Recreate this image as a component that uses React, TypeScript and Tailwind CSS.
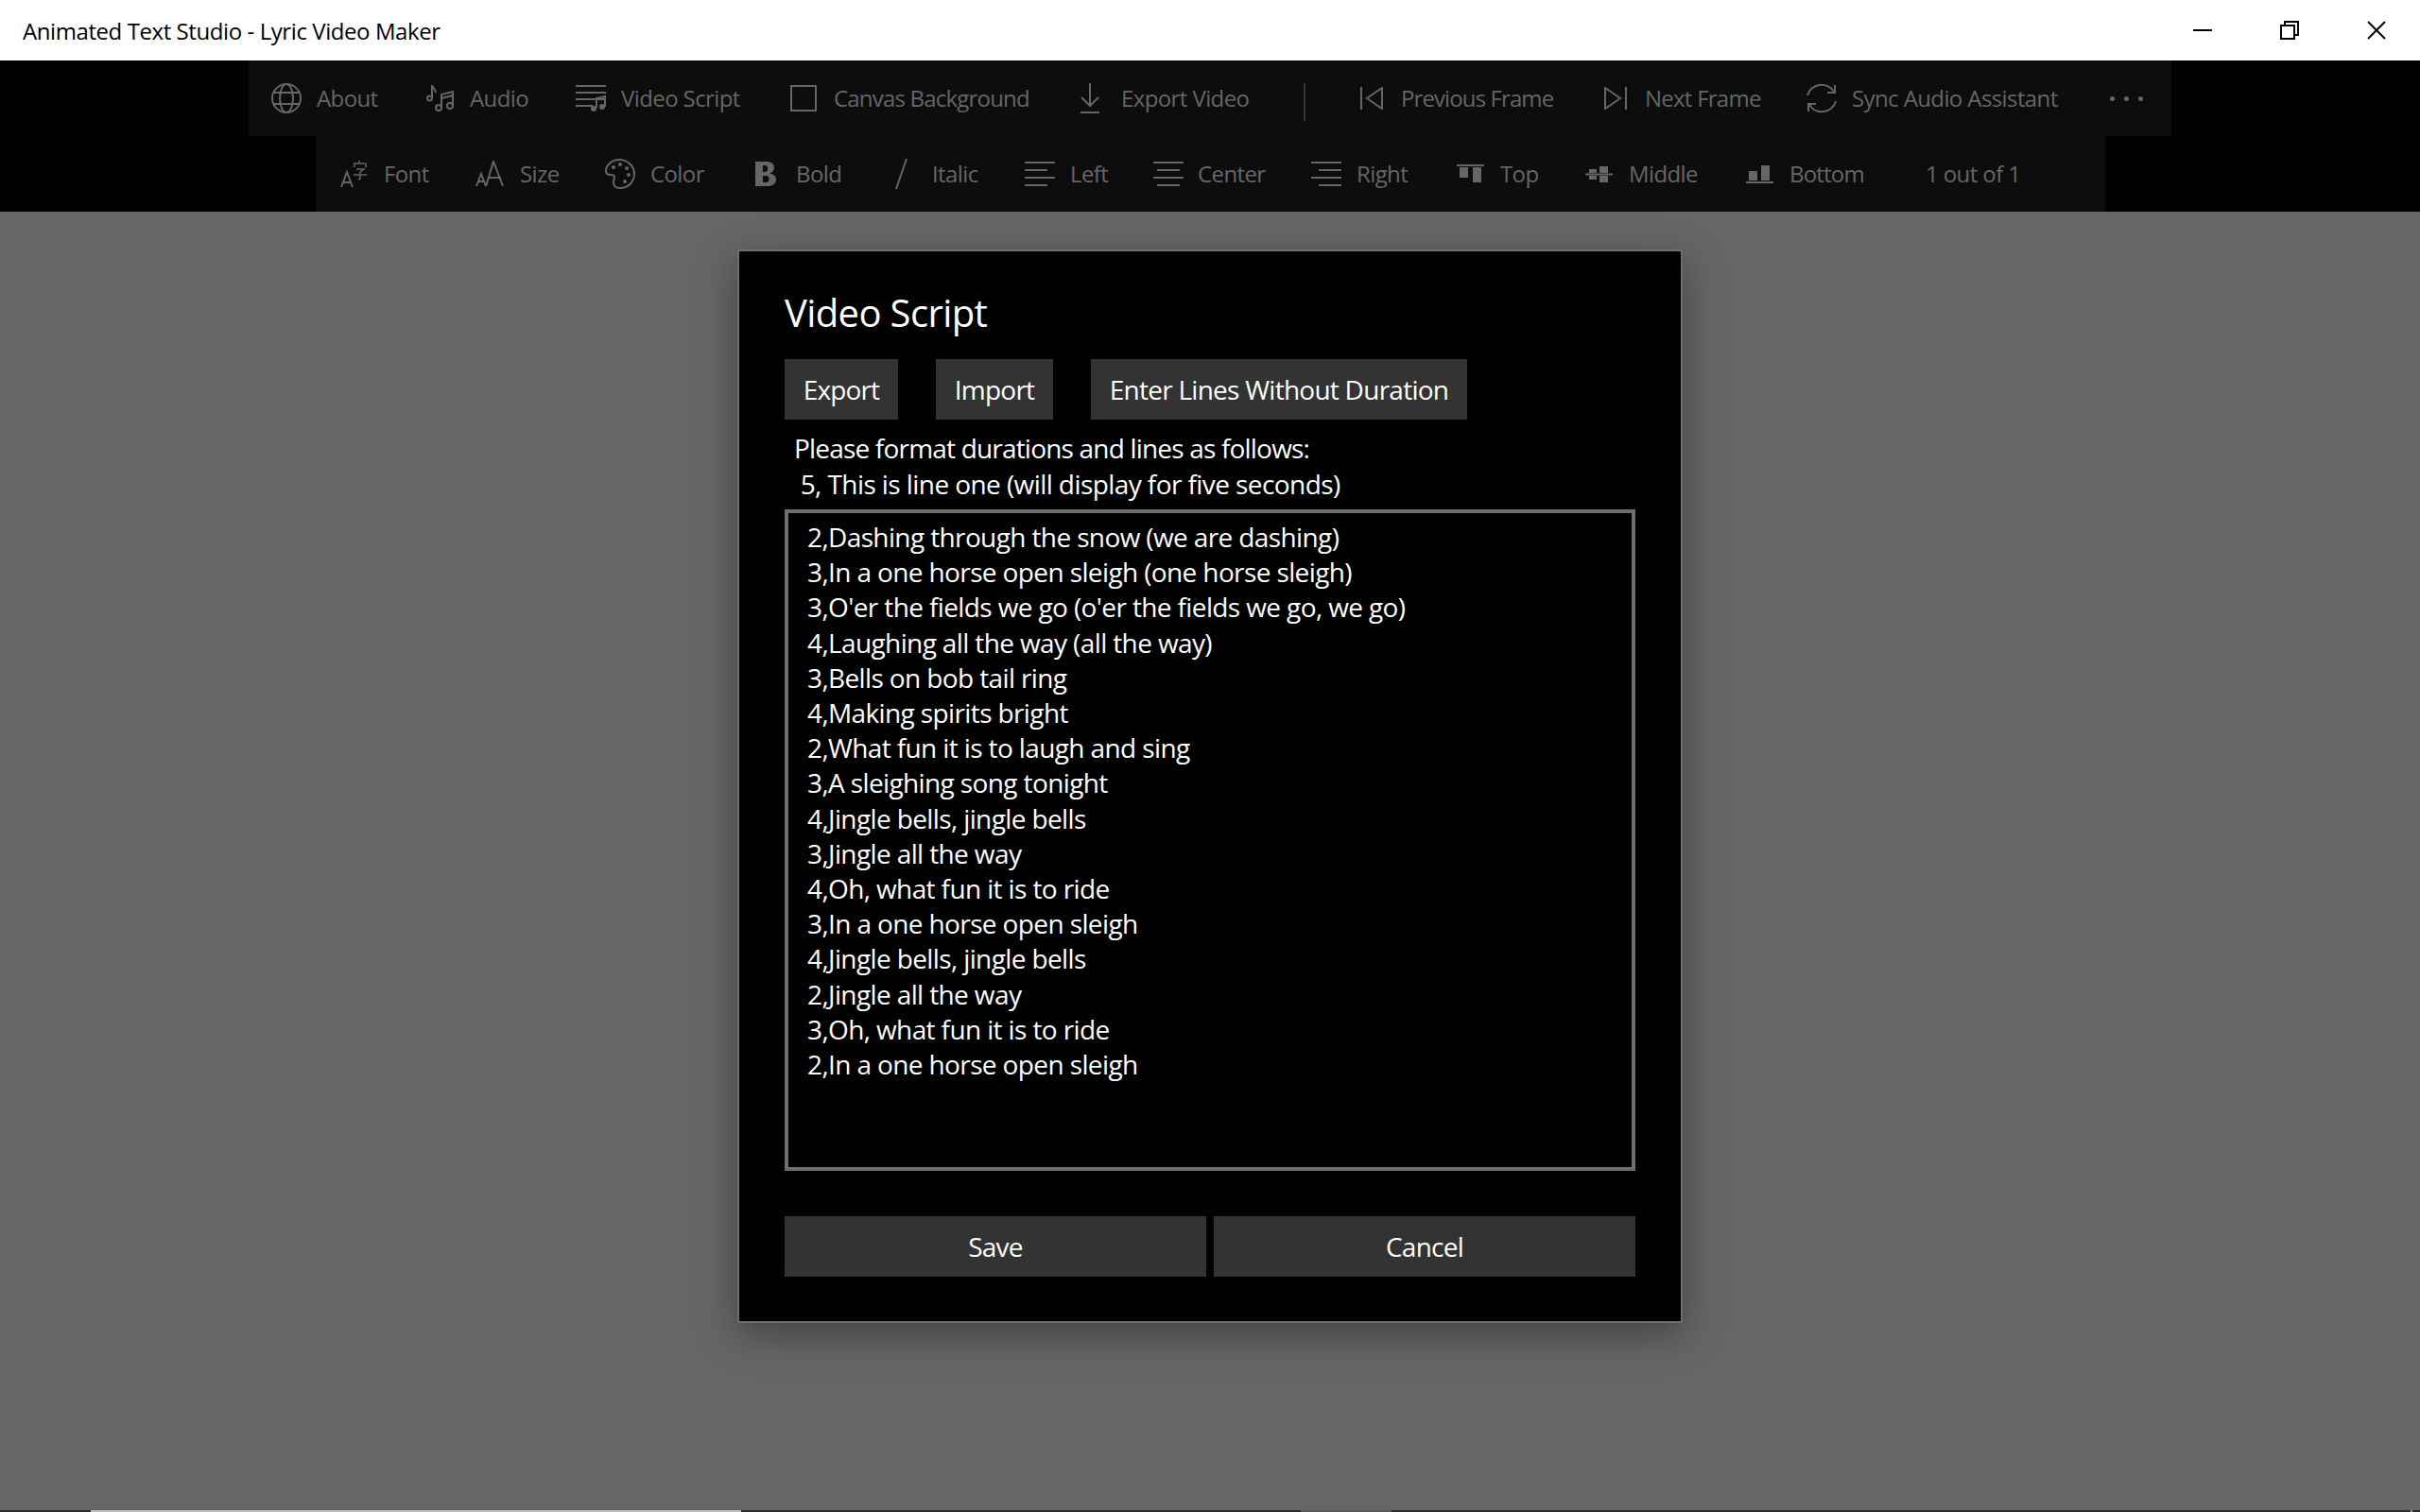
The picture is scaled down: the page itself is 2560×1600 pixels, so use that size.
import type { ReactNode } from 'react';

const stroke = { fill: 'none', stroke: '#666', strokeWidth: 2 };

function Icon({ w, h, children }: { w: number; h: number; children: ReactNode }) {
  return (
    <svg width={w} height={h} viewBox={`0 0 ${w} ${h}`} className="shrink-0">
      {children}
    </svg>
  );
}

const icons: Record<string, ReactNode> = {
  about: (
    <Icon w={32} h={32}>
      <g {...stroke}>
        <circle cx="16" cy="16" r="15" />
        <ellipse cx="16" cy="16" rx="7" ry="15" />
        <path d="M3 10h26M3 22h26" />
      </g>
    </Icon>
  ),
  audio: (
    <Icon w={30} h={30}>
      <g {...stroke}>
        <circle cx="3.500" cy="15" r="2.500" />
        <path d="M6 15V1c0 3 4 4 4 8" />
        <circle cx="13" cy="25" r="3" />
        <circle cx="25" cy="23" r="3" />
        <path d="M16 25V11l12-3v15M16 15l12-3" />
      </g>
    </Icon>
  ),
  script: (
    <Icon w={32} h={28}>
      <g {...stroke}>
        <path d="M0 1h32M0 8h32M0 15h32M0 22h18" />
        <path d="M22 24V14l9-2v11" />
      </g>
      <circle cx="19" cy="25" r="3" fill="#666" />
      <circle cx="28" cy="23" r="3" fill="#666" />
    </Icon>
  ),
  canvas: (
    <Icon w={28} h={28}>
      <rect x="1" y="1" width="26" height="26" {...stroke} />
    </Icon>
  ),
  export: (
    <Icon w={20} h={32}>
      <g {...stroke}>
        <path d="M10 0v24M1 15l9 9 9-9M0 31h20" />
      </g>
    </Icon>
  ),
  prev: (
    <Icon w={24} h={24}>
      <g {...stroke}>
        <path d="M1 0v24M23 1v22L7 12z" />
      </g>
    </Icon>
  ),
  next: (
    <Icon w={24} h={24}>
      <g {...stroke}>
        <path d="M23 0v24M1 1v22l16-11z" />
      </g>
    </Icon>
  ),
  sync: (
    <Icon w={32} h={32}>
      <g {...stroke}>
        <path d="M1 13A15.500 15.500 0 0 1 29 9" />
        <path d="M30 2v8h-8" />
        <path d="M31 19A15.500 15.500 0 0 1 3 23" />
        <path d="M2 30v-8h8" />
      </g>
    </Icon>
  ),
  font: (
    <Icon w={28} h={30}>
      <g {...stroke}>
        <path d="M1 29l6-16 6 16M3 24h8" />
        <path d="M14 4h13M20 1v3M15 8v-4M27 8v-4M17 10h8l-4 3M14 16h14M21 13v7l-2 1" strokeWidth="1.500" />
      </g>
    </Icon>
  ),
  size: (
    <Icon w={30} h={28}>
      <g {...stroke}>
        <path d="M1 27l5-13 5 13M3 22h6" />
        <path d="M11 27L19 1l10 26M14 18h13" />
      </g>
    </Icon>
  ),
  color: (
    <Icon w={32} h={32}>
      <g {...stroke}>
        <path d="M15 1C7 1 1 7 1 13c0 3 2 4 5 4 2 0 4 0 4 2 0 2-1 3-1 6 0 4 3 6 7 6 9 0 15-7 15-15S24 1 15 1z" />
      </g>
      <g fill="#666">
        <circle cx="9" cy="9" r="2" />
        <circle cx="16" cy="6" r="2" />
        <circle cx="23" cy="10" r="2" />
        <circle cx="25" cy="17" r="2" />
        <circle cx="21" cy="24" r="2" />
      </g>
    </Icon>
  ),
  bold: (
    <Icon w={22} h={26}>
      <path
        fillRule="evenodd"
        fill="#666"
        d="M0 0h11c6 0 9 2.500 9 6.500 0 3-2 5-5 6 4 .5 7 3 7 6.500 0 4.500-4 7-10 7H0zM8 4v7h1.500c3 0 3.500-1.200 3.500-3.500S12.500 4 9.500 4zM8 15v7h2.500c3.500 0 4-1.300 4-3.500S14 15 10.500 15z"
      />
    </Icon>
  ),
  italic: (
    <Icon w={13} h={32}>
      <path d="M12 0L1 32" {...stroke} />
    </Icon>
  ),
  left: (
    <Icon w={32} h={26}>
      <path d="M0 1h32M0 9h24M0 17h32M0 25h24" {...stroke} />
    </Icon>
  ),
  center: (
    <Icon w={32} h={26}>
      <path d="M0 1h32M4 9h24M0 17h32M4 25h24" {...stroke} />
    </Icon>
  ),
  right: (
    <Icon w={32} h={26}>
      <path d="M0 1h32M8 9h24M0 17h32M8 25h24" {...stroke} />
    </Icon>
  ),
  top: (
    <Icon w={29} h={20}>
      <path d="M0 1h29" {...stroke} />
      <path d="M3 3h9v11H3zM17 3h9v16h-9z" fill="#666" />
    </Icon>
  ),
  middle: (
    <Icon w={29} h={17}>
      <path d="M0 8.500h29" {...stroke} />
      <path d="M4 3h8v4H4zM4 10h8v4H4zM15 0h9v7h-9zM15 10h9v7h-9z" fill="#666" />
    </Icon>
  ),
  bottom: (
    <Icon w={29} h={20}>
      <path d="M0 19h29" {...stroke} />
      <path d="M3 7h9v10H3zM16 1h9v16h-9z" fill="#666" />
    </Icon>
  ),
};

const topItems = [
  { icon: 'about', label: 'About', cls: 'w-[164px]', slot: 'w-[48px]' },
  { icon: 'audio', label: 'Audio', cls: 'w-[158px]', slot: 'w-[46px]' },
  { icon: 'script', label: 'Video Script', cls: 'w-[227px]', slot: 'w-[48px]' },
  { icon: 'canvas', label: 'Canvas Background', cls: 'w-[307px] tracking-[-0.8px]', slot: 'w-[46px]' },
  { icon: 'export', label: 'Export Video', cls: 'w-[236px]', slot: 'w-[43px]' },
];

const frameItems = [
  { icon: 'prev', label: 'Previous Frame', cls: 'w-[258px] tracking-[-0.9px]', slot: 'w-[43px]' },
  { icon: 'next', label: 'Next Frame', cls: 'w-[214px] tracking-[-0.75px]', slot: 'w-[43px]' },
  { icon: 'sync', label: 'Sync Audio Assistant', cls: 'w-[321px]', slot: 'w-[48px]' },
];

const formatItems = [
  { icon: 'font', label: 'Font', cls: 'w-[143px]', slot: 'w-[46px]' },
  { icon: 'size', label: 'Size', cls: 'w-[137px]', slot: 'w-[47px]' },
  { icon: 'color', label: 'Color', cls: 'w-[159px]', slot: 'w-[48px]' },
  { icon: 'bold', label: 'Bold', cls: 'w-[148px]', slot: 'w-[43px]' },
  { icon: 'italic', label: 'Italic', cls: 'w-[137px]', slot: 'w-[39px]' },
  { icon: 'left', label: 'Left', cls: 'w-[136px]', slot: 'w-[48px]' },
  { icon: 'center', label: 'Center', cls: 'w-[167px]', slot: 'w-[47px]' },
  { icon: 'right', label: 'Right', cls: 'w-[154px]', slot: 'w-[48px]' },
  { icon: 'top', label: 'Top', cls: 'w-[136px]', slot: 'w-[46px]' },
  { icon: 'middle', label: 'Middle', cls: 'w-[170px]', slot: 'w-[46px]' },
  { icon: 'bottom', label: 'Bottom', cls: 'w-[190px] tracking-[-0.8px]', slot: 'w-[46px]' },
];

const lyrics = [
  '2,Dashing through the snow (we are dashing)',
  '3,In a one horse open sleigh (one horse sleigh)',
  "3,O'er the fields we go (o'er the fields we go, we go)",
  '4,Laughing all the way (all the way)',
  '3,Bells on bob tail ring',
  '4,Making spirits bright',
  '2,What fun it is to laugh and sing',
  '3,A sleighing song tonight',
  '4,Jingle bells, jingle bells',
  '3,Jingle all the way',
  '4,Oh, what fun it is to ride',
  '3,In a one horse open sleigh',
  '4,Jingle bells, jingle bells',
  '2,Jingle all the way',
  '3,Oh, what fun it is to ride',
  '2,In a one horse open sleigh',
];

function ToolItem({ icon, label, cls, slot }: { icon: string; label: string; cls: string; slot: string }) {
  return (
    <div className={`flex items-center shrink-0 ${cls}`}>
      <div className={`flex items-center shrink-0 ${slot}`}>{icons[icon]}</div>
      <span className="whitespace-nowrap">{label}</span>
    </div>
  );
}

export default function App() {
  return (
    <div className="flex flex-col w-[2560px] h-[1600px] overflow-hidden bg-[#666] font-['Open_Sans',sans-serif]">
      {/* Title bar */}
      <div className="flex items-center justify-between h-[64px] bg-white text-black">
        <span className="pl-[24px] pt-[1px] text-[24px] tracking-[-0.42px]">Animated Text Studio - Lyric Video Maker</span>
        <div className="flex items-center">
          <svg width="20" height="2" className="mr-[72px]"><path d="M0 1h20" stroke="#000" strokeWidth="2" /></svg>
          <svg width="20" height="20" className="mr-[72px]" fill="none" stroke="#000" strokeWidth="2">
            <path d="M1 5h14v14H1zM5 5V1h14v14h-4" />
          </svg>
          <svg width="20" height="20" className="mr-[36px]" fill="none" stroke="#000" strokeWidth="2">
            <path d="M1 1l18 18M19 1L1 19" />
          </svg>
        </div>
      </div>

      {/* Dimmed command bars */}
      <div className="bg-black text-[#666] text-[24px] tracking-[-0.6px]">
        <div className="flex items-center h-[80px] w-[2034px] ml-[263px] pl-[24px] bg-[#0d0d0d]">
          {topItems.map((item) => (
            <ToolItem key={item.label} {...item} />
          ))}
          <div className="w-[2px] h-[40px] bg-[#333] mt-[8px] shrink-0" />
          <div className="w-[58px] shrink-0" />
          {frameItems.map((item) => (
            <ToolItem key={item.label} {...item} />
          ))}
          <div className="flex items-center gap-[10px]">
            <div className="w-[5px] h-[5px] rounded-full bg-[#666]" />
            <div className="w-[5px] h-[5px] rounded-full bg-[#666]" />
            <div className="w-[5px] h-[5px] rounded-full bg-[#666]" />
          </div>
        </div>
        <div className="flex items-center h-[80px] w-[1893px] ml-[334px] pl-[26px] bg-[#0d0d0d]">
          {formatItems.map((item) => (
            <ToolItem key={item.label} {...item} />
          ))}
          <span className="whitespace-nowrap">1 out of 1</span>
        </div>
      </div>

      {/* Dialog */}
      <div className="flex-1 flex flex-col items-center pt-[40px]">
        <div className="w-[1000px] h-[1136px] px-[48px] border-2 border-[#6e6e6e] bg-black text-white text-[28px] tracking-[-0.74px] shadow-[0_12px_40px_rgba(0,0,0,0.35)]">
          <div className="pt-[38px] h-[114px] text-[40px] leading-[54px] tracking-[-0.62px]">Video Script</div>
          <div className="flex gap-[40px]">
            <button className="h-[64px] w-[120px] bg-[#333] tracking-[-0.85px]">Export</button>
            <button className="h-[64px] w-[124px] bg-[#333]">Import</button>
            <button className="h-[64px] w-[398px] bg-[#333]">Enter Lines Without Duration</button>
          </div>
          <div className="mt-[12px] pl-[10px] leading-[37.5px] whitespace-pre">
            <div className="tracking-[-0.81px]">Please format durations and lines as follows:</div>
            <div className="tracking-[-0.58px]"> 5, This is line one (will display for five seconds)</div>
          </div>
          <div className="mt-[8px] h-[700px] border-4 border-[#6e6e6e] pl-[20px] pt-[7px] leading-[37.2px] tracking-[-0.62px]">
            {lyrics.map((line, i) => (
              <div key={i}>{line}</div>
            ))}
          </div>
          <div className="flex justify-between mt-[48px]">
            <button className="h-[64px] w-[446px] bg-[#333]">Save</button>
            <button className="h-[64px] w-[446px] bg-[#333]">Cancel</button>
          </div>
        </div>
      </div>

      {/* Horizontal scrollbar */}
      <div className="flex h-[2px] shrink-0">
        <div className="w-[96px] bg-[#2e2e2e]" />
        <div className="w-[688px] bg-[#c0c0c0]" />
        <div className="w-[592px] bg-[#2e2e2e]" />
        <div className="w-[96px] bg-[#5a5a5a]" />
        <div className="w-[1078px] bg-[#2e2e2e]" />
        <div className="w-[2px] bg-[#999]" />
        <div className="flex-1 bg-[#2e2e2e]" />
      </div>
    </div>
  );
}
